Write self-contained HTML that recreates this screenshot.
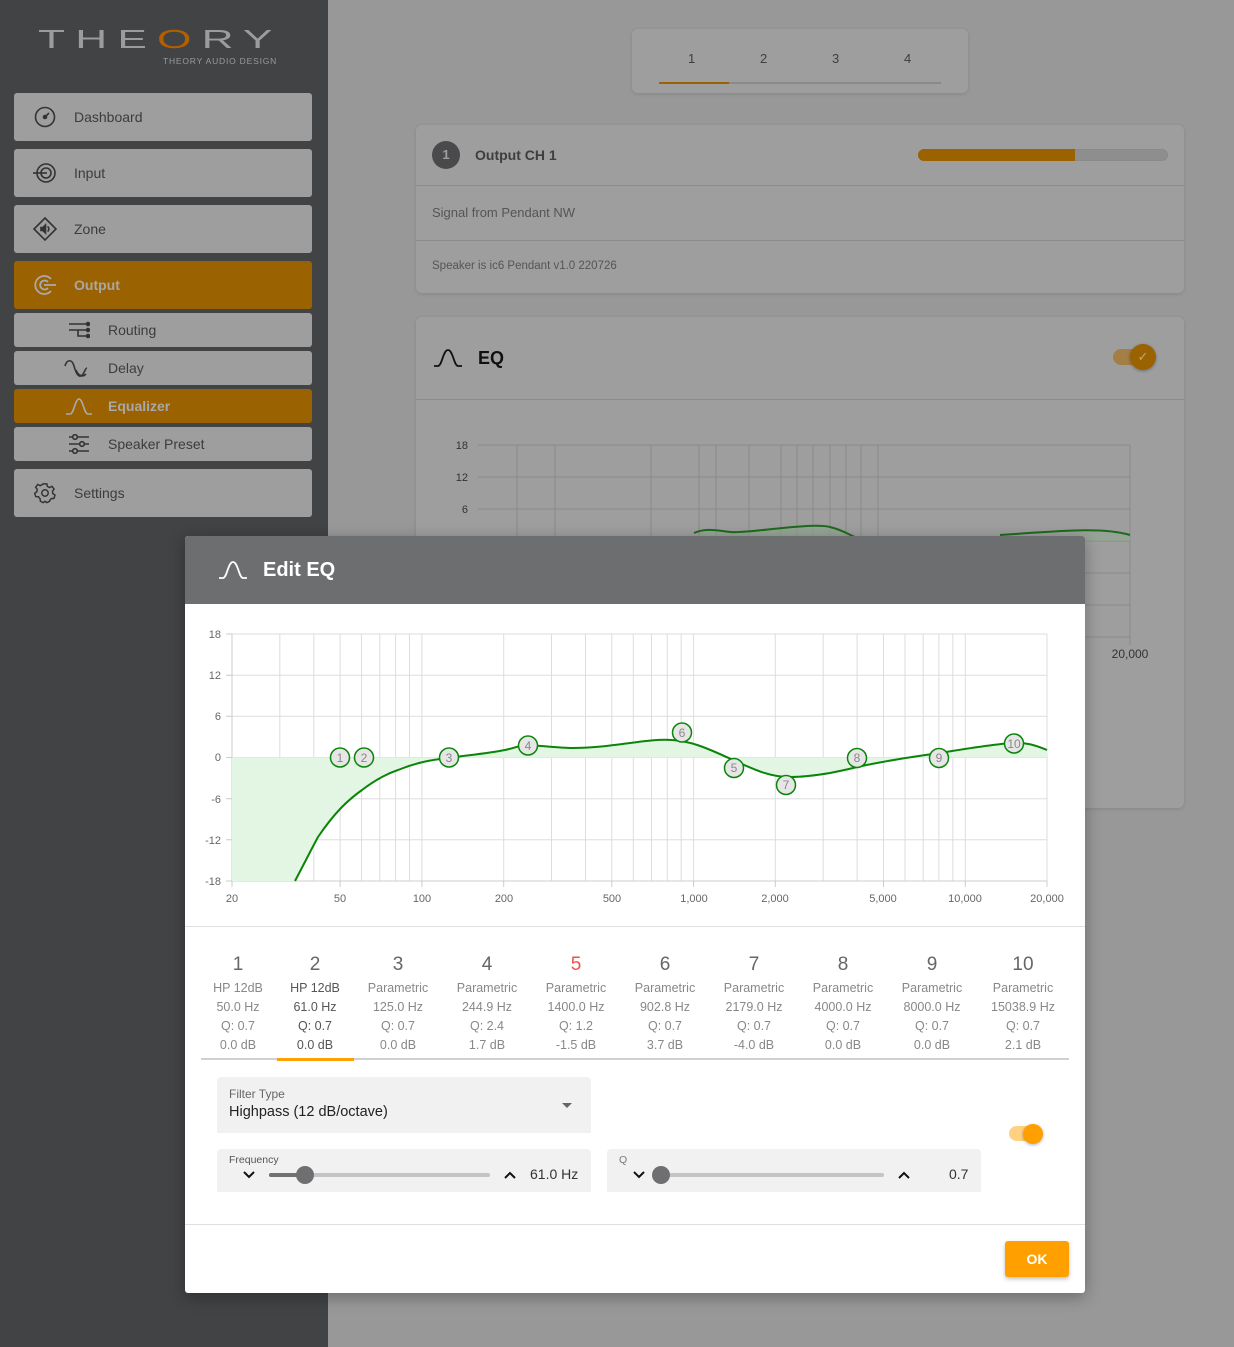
<!DOCTYPE html>
<html><head><meta charset="utf-8">
<style>
*{margin:0;padding:0;box-sizing:border-box}
body{width:1234px;height:1347px;position:relative;overflow:hidden;background:#989898;font-family:"Liberation Sans",sans-serif;}
.abs{position:absolute}
#side{left:0;top:0;width:328px;height:1347px;background:#424345}
.nav{position:absolute;left:14px;width:298px;background:#9e9e9e;border-radius:3px;color:#3c3c3c;font-size:14px}
.nav.on{background:#9a6200;color:#a8a8a8;font-weight:bold}
.nav span{position:absolute;top:50%;transform:translateY(-50%)}
.nav svg{position:absolute;top:50%;transform:translateY(-50%)}
.card{position:absolute;background:#9e9e9e;border-radius:6px;box-shadow:0 1px 4px rgba(0,0,0,.12)}
#modal{left:185px;top:536px;width:900px;height:757px;background:#fff;border-radius:3px;box-shadow:0 4px 16px rgba(0,0,0,.3);overflow:hidden}
.band{position:absolute;top:951px;width:80px;text-align:center;color:#888;font-size:12.5px;line-height:19px}
.band b{display:block;font-size:19px;font-weight:normal;color:#666;line-height:28px}
.field{position:absolute;background:#f1f1f1;border-radius:4px 4px 0 0}
</style></head><body>
<div id="side" class="abs">
  <div class="abs" style="left:38px;top:26px;font-size:26px;color:#9c9c9c;letter-spacing:6px;white-space:nowrap;transform-origin:0 0;transform:scaleX(1.7);line-height:26px">THE<span style="color:#b35f00">O</span>RY</div>
  <div class="abs" style="left:163px;top:56px;font-size:8.5px;color:#9a9a9a;letter-spacing:0.8px">THEORY AUDIO DESIGN</div>

  <div class="nav" style="top:93px;height:48px"><svg style="left:20px" width="22" height="22" viewBox="0 0 22 22" fill="none" stroke="#333" stroke-width="1.6"><circle cx="11" cy="11" r="9.5"/><path d="M11 11l4-4"/><circle cx="11" cy="11" r="1.5" fill="#333"/></svg><span style="left:60px">Dashboard</span></div>
  <div class="nav" style="top:149px;height:48px"><svg style="left:18px" width="26" height="22" viewBox="0 0 26 22" fill="none" stroke="#333" stroke-width="1.6"><circle cx="14" cy="11" r="9"/><circle cx="14" cy="11" r="5"/><path d="M1 11h14"/></svg><span style="left:60px">Input</span></div>
  <div class="nav" style="top:205px;height:48px"><svg style="left:19px" width="24" height="24" viewBox="0 0 24 24" fill="none" stroke="#333" stroke-width="1.6"><path d="M12 1L23 12 12 23 1 12z"/><path d="M8 10.5h2l2.5-2.5v8l-2.5-2.5H8z" fill="#333"/><path d="M14.5 9.5a3 3 0 0 1 0 5"/></svg><span style="left:60px">Zone</span></div>
  <div class="nav on" style="top:261px;height:48px"><svg style="left:18px" width="26" height="22" viewBox="0 0 26 22" fill="none" stroke="#aaa" stroke-width="1.8"><path d="M19 5a9 9 0 1 0 0 12"/><path d="M16 8a4.5 4.5 0 1 0 0 6"/><path d="M12 11h12"/></svg><span style="left:60px">Output</span></div>
  <div class="nav" style="top:313px;height:34px"><svg style="left:54px" width="22" height="18" viewBox="0 0 22 18" fill="none" stroke="#333" stroke-width="1.6"><path d="M1 3h20M1 9h20M10 9v6h11"/><circle cx="20" cy="3" r="1.5" fill="#333"/><circle cx="20" cy="9" r="1.5" fill="#333"/><circle cx="20" cy="15" r="1.5" fill="#333"/></svg><span style="left:94px">Routing</span></div>
  <div class="nav" style="top:351px;height:34px"><svg style="left:50px" width="30" height="20" viewBox="0 0 30 20" fill="none" stroke="#333" stroke-width="1.6"><path d="M1 8C3 1 8 1 10 8s4 11 7 10 4-8 6-8M12 12c2 5 6 8 10 4"/></svg><span style="left:94px">Delay</span></div>
  <div class="nav on" style="top:389px;height:34px"><svg style="left:51px" width="28" height="18" viewBox="0 0 28 18" fill="none" stroke="#aaa" stroke-width="1.6"><path d="M1 17h4C9 17 10 2 14 2s5 15 9 15h4"/></svg><span style="left:94px">Equalizer</span></div>
  <div class="nav" style="top:427px;height:34px"><svg style="left:54px" width="22" height="20" viewBox="0 0 22 20" fill="none" stroke="#333" stroke-width="1.6"><path d="M1 3h20M1 10h20M1 17h20"/><circle cx="7" cy="3" r="2.3" fill="#9e9e9e"/><circle cx="14" cy="10" r="2.3" fill="#9e9e9e"/><circle cx="7" cy="17" r="2.3" fill="#9e9e9e"/></svg><span style="left:94px">Speaker Preset</span></div>
  <div class="nav" style="top:469px;height:48px"><svg style="left:20px" width="22" height="22" viewBox="0 0 24 24" fill="none" stroke="#333" stroke-width="1.6"><circle cx="12" cy="12" r="3.5"/><path d="M10 2h4l.6 2.8 2.4 1.2 2.6-1.3 2.3 3-1.7 2.3.3 2.6 2.4 1.6-1.1 3.7-2.9.2-1.8 2L17 21l-3 1.5-2-1.5-2 1.5L7 21l-.4-2.9-1.8-2-2.9-.2L.8 12.2l2.4-1.6.3-2.6L1.8 5.7l2.3-3 2.6 1.3 2.4-1.2z"/></svg><span style="left:60px">Settings</span></div>
</div>

<div class="card" style="left:632px;top:29px;width:336px;height:64px">
  <div class="abs" style="left:56px;top:22px;font-size:13px;color:#3e3e3e">1</div>
  <div class="abs" style="left:128px;top:22px;font-size:13px;color:#3e3e3e">2</div>
  <div class="abs" style="left:200px;top:22px;font-size:13px;color:#3e3e3e">3</div>
  <div class="abs" style="left:272px;top:22px;font-size:13px;color:#3e3e3e">4</div>
  <div class="abs" style="left:27px;top:53px;width:282px;height:2px;background:#8a8a8a"></div>
  <div class="abs" style="left:27px;top:53px;width:70px;height:2px;background:#9a6200"></div>
</div>

<div class="card" style="left:416px;top:125px;width:768px;height:168px">
  <div class="abs" style="left:16px;top:16px;width:28px;height:28px;border-radius:50%;background:#4a4a4c;color:#9e9e9e;font-size:13px;font-weight:bold;text-align:center;line-height:28px">1</div>
  <div class="abs" style="left:59px;top:22px;font-size:14px;color:#3e3e3e;font-weight:bold">Output CH 1</div>
  <div class="abs" style="left:502px;top:24px;width:250px;height:12px;border-radius:6px;background:#8e8e8e;border:1px solid #8a8a8a"></div>
  <div class="abs" style="left:502px;top:24px;width:157px;height:12px;border-radius:6px 0 0 6px;background:#9a6200"></div>
  <div class="abs" style="left:0;top:60px;width:768px;height:1px;background:#8c8c8c"></div>
  <div class="abs" style="left:16px;top:80px;font-size:13px;color:#555">Signal from Pendant NW</div>
  <div class="abs" style="left:0;top:115px;width:768px;height:1px;background:#8c8c8c"></div>
  <div class="abs" style="left:16px;top:135px;font-size:11.5px;color:#555">Speaker is ic6 Pendant v1.0 220726</div>
</div>

<div class="card" style="left:416px;top:317px;width:768px;height:491px">
  <svg class="abs" style="left:17px;top:31px" width="30" height="20" viewBox="0 0 30 20" fill="none" stroke="#111" stroke-width="1.8"><path d="M1 18h4C9 18 10 2 15 2s6 16 10 16h4"/></svg>
  <div class="abs" style="left:62px;top:31px;font-size:18px;color:#111;font-weight:bold">EQ</div>
  <div class="abs" style="left:697px;top:32px;width:34px;height:16px;border-radius:8px;background:#a37e45"></div>
  <div class="abs" style="left:714px;top:27px;width:26px;height:26px;border-radius:50%;background:#9a6200;box-shadow:0 1px 3px rgba(0,0,0,.3);color:#c9a66b;font-size:13px;text-align:center;line-height:26px">✓</div>
  <div class="abs" style="left:0;top:82px;width:768px;height:1px;background:#8c8c8c"></div>
</div>
<svg class="abs" style="left:0;top:0" width="1234" height="1347">
  <g stroke="#8a8a8a" stroke-width="1">
    <path d="M478 445H1130M478 477H1130M478 509H1130M478 541H1130M478 573H1130M478 605H1130M478 637H1130M1130 445V645"/>
    <path d="M517 445V637M555 445V637M651 445V637M699 445V637M716 445V637M749 445V637M781 445V637M797 445V637M813 445V637M830 445V637M846 445V637M861 445V637M878 445V637"/>
  </g>
  <path d="M694 541C705 528 715 530 730 532S810 522 830 527S850 538 870 541H1000C1050 535 1090 530 1130 535V541H694Z" fill="#8fa88f" opacity=".6"/>
  <path d="M694 533C705 528 715 530 730 532S810 522 830 527S850 538 870 541M1000 535C1050 532 1100 526 1130 535" fill="none" stroke="#1e6a1e" stroke-width="2"/>
  <text x="1130" y="658" font-size="12" fill="#333" text-anchor="middle" font-family="Liberation Sans">20,000</text>
  <g font-size="11" fill="#333" text-anchor="end" font-family="Liberation Sans"><text x="468" y="449">18</text><text x="468" y="481">12</text><text x="468" y="513">6</text></g>
</svg>

<div id="modal" class="abs">
  <div class="abs" style="left:0;top:0;width:900px;height:68px;background:#6d6e70"></div>
  <svg class="abs" style="left:33px;top:24px" width="30" height="20" viewBox="0 0 30 20" fill="none" stroke="#fff" stroke-width="1.8"><path d="M1 18h4C9 18 10 2 15 2s6 16 10 16h4"/></svg>
  <div class="abs" style="left:78px;top:23px;font-size:20px;color:#fff;font-weight:bold">Edit EQ</div>
  <div class="abs" style="left:0;top:390px;width:900px;height:1px;background:#e0e0e0"></div>
  <div class="abs" style="left:0;top:688px;width:900px;height:1px;background:#e0e0e0"></div>
</div>

<svg class="abs" style="left:0;top:0" width="1234" height="1347" font-family="Liberation Sans">
  <g stroke="#ddd" stroke-width="1">
    <path d="M232 634H1047M232 675.2H1047M232 716.3H1047M232 757.5H1047M232 798.7H1047M232 839.8H1047"/>
    <path d="M279.8 634V881M313.8 634V881M340.1 634V881M361.6 634V881M379.8 634V881M395.6 634V881M409.5 634V881M421.9 634V881M503.7 634V881M551.5 634V881M585.5 634V881M611.8 634V881M633.3 634V881M651.5 634V881M667.3 634V881M681.2 634V881M693.6 634V881M775.3 634V881M823.2 634V881M857.1 634V881M883.5 634V881M905 634V881M923.2 634V881M938.9 634V881M952.8 634V881M965.3 634V881M1047 634V881"/>
  </g>
  <g stroke="#ccc"><path d="M232 634V887M226 881H1047M226 634H232M226 675.2H232M226 716.3H232M226 757.5H232M226 798.7H232M226 839.8H232M340.1 881V887M421.9 881V887M503.7 881V887M611.8 881V887M693.6 881V887M775.3 881V887M883.5 881V887M965.3 881V887M1047 881V887"/></g>
  <path d="M232 757.5V881H295C305 862 312 848 318 837C335 812 348 800 362 790C375 780 386 774 398 770C415 763 430 760 448 758C470 755 490 753 505 750C515 748 520 745 528 745C545 746 560 748 572 748C595 748 615 745 630 743C645 741 660 739 672 740C690 741 705 747 733 760C755 770 770 777 790 777C805 777 818 775 830 773C845 770 850 769 857 767C885 761 910 757 940 753C970 748 995 744 1013 743C1025 742 1035 745 1047 750V757.5Z" fill="#e3f6e3"/>
  <path d="M295 881C305 862 312 848 318 837C335 812 348 800 362 790C375 780 386 774 398 770C415 763 430 760 448 758C470 755 490 753 505 750C515 748 520 745 528 745C545 746 560 748 572 748C595 748 615 745 630 743C645 741 660 739 672 740C690 741 705 747 733 760C755 770 770 777 790 777C805 777 818 775 830 773C845 770 850 769 857 767C885 761 910 757 940 753C970 748 995 744 1013 743C1025 742 1035 745 1047 750" fill="none" stroke="#0a850a" stroke-width="2"/>
  <g fill="#e6e6e6" stroke="#0a850a" stroke-width="1.5">
    <circle cx="340" cy="757.5" r="9.5"/><circle cx="364" cy="757.5" r="9.5"/><circle cx="449" cy="757.5" r="9.5"/><circle cx="528" cy="745.5" r="9.5"/><circle cx="734" cy="768" r="9.5"/><circle cx="682" cy="732.5" r="9.5"/><circle cx="786" cy="785" r="9.5"/><circle cx="857" cy="758" r="9.5"/><circle cx="939" cy="758" r="9.5"/><circle cx="1014" cy="743.5" r="9.5"/>
  </g>
  <g font-size="12" fill="#888" text-anchor="middle">
    <text x="340" y="762">1</text><text x="364" y="762">2</text><text x="449" y="762">3</text><text x="528" y="750">4</text><text x="734" y="772">5</text><text x="682" y="737">6</text><text x="786" y="789">7</text><text x="857" y="762">8</text><text x="939" y="762">9</text><text x="1014" y="748">10</text>
  </g>
  <g font-size="11" fill="#666" text-anchor="end">
    <text x="221" y="638">18</text><text x="221" y="679">12</text><text x="221" y="720">6</text><text x="221" y="761">0</text><text x="221" y="803">-6</text><text x="221" y="844">-12</text><text x="221" y="885">-18</text>
  </g>
  <g font-size="11" fill="#666" text-anchor="middle">
    <text x="232" y="902">20</text><text x="340" y="902">50</text><text x="422" y="902">100</text><text x="504" y="902">200</text><text x="612" y="902">500</text><text x="694" y="902">1,000</text><text x="775" y="902">2,000</text><text x="883" y="902">5,000</text><text x="965" y="902">10,000</text><text x="1047" y="902">20,000</text>
  </g>
</svg>

<div class="band" style="left:198px"><b>1</b>HP 12dB<br>50.0 Hz<br>Q: 0.7<br>0.0 dB</div>
<div class="band" style="left:275px;color:#555"><b>2</b>HP 12dB<br>61.0 Hz<br>Q: 0.7<br>0.0 dB</div>
<div class="band" style="left:358px"><b>3</b>Parametric<br>125.0 Hz<br>Q: 0.7<br>0.0 dB</div>
<div class="band" style="left:447px"><b>4</b>Parametric<br>244.9 Hz<br>Q: 2.4<br>1.7 dB</div>
<div class="band" style="left:536px"><b style="color:#f0524a">5</b>Parametric<br>1400.0 Hz<br>Q: 1.2<br>-1.5 dB</div>
<div class="band" style="left:625px"><b>6</b>Parametric<br>902.8 Hz<br>Q: 0.7<br>3.7 dB</div>
<div class="band" style="left:714px"><b>7</b>Parametric<br>2179.0 Hz<br>Q: 0.7<br>-4.0 dB</div>
<div class="band" style="left:803px"><b>8</b>Parametric<br>4000.0 Hz<br>Q: 0.7<br>0.0 dB</div>
<div class="band" style="left:892px"><b>9</b>Parametric<br>8000.0 Hz<br>Q: 0.7<br>0.0 dB</div>
<div class="band" style="left:978px;width:90px"><b>10</b>Parametric<br>15038.9 Hz<br>Q: 0.7<br>2.1 dB</div>
<div class="abs" style="left:201px;top:1058px;width:868px;height:2px;background:#d0d0d0"></div>
<div class="abs" style="left:277px;top:1058px;width:77px;height:3px;background:#ffa000"></div>

<div class="field" style="left:217px;top:1077px;width:374px;height:56px">
  <div class="abs" style="left:12px;top:10px;font-size:12px;color:#666">Filter Type</div>
  <div class="abs" style="left:12px;top:27px;font-size:14.5px;color:#222">Highpass (12 dB/octave)</div>
  <div class="abs" style="left:345px;top:26px;border-left:5px solid transparent;border-right:5px solid transparent;border-top:5px solid #666"></div>
</div>
<div class="field" style="left:217px;top:1149px;width:374px;height:43px">
  <div class="abs" style="left:12px;top:5px;font-size:10.5px;color:#555">Frequency</div>
  <svg class="abs" style="left:26px;top:22px" width="12" height="8" viewBox="0 0 12 8" fill="none" stroke="#111" stroke-width="2"><path d="M1 1l5 5 5-5"/></svg>
  <div class="abs" style="left:52px;top:24px;width:221px;height:4px;border-radius:2px;background:#c4c4c4"></div>
  <div class="abs" style="left:52px;top:24px;width:36px;height:4px;border-radius:2px;background:#707070"></div>
  <div class="abs" style="left:79px;top:17px;width:18px;height:18px;border-radius:50%;background:#6f6f71"></div>
  <svg class="abs" style="left:287px;top:22px" width="12" height="8" viewBox="0 0 12 8" fill="none" stroke="#111" stroke-width="2"><path d="M1 7l5-5 5 5"/></svg>
  <div class="abs" style="left:313px;top:17px;font-size:14px;color:#333">61.0 Hz</div>
</div>
<div class="field" style="left:607px;top:1149px;width:374px;height:43px">
  <div class="abs" style="left:12px;top:5px;font-size:10.5px;color:#777">Q</div>
  <svg class="abs" style="left:26px;top:22px" width="12" height="8" viewBox="0 0 12 8" fill="none" stroke="#111" stroke-width="2"><path d="M1 1l5 5 5-5"/></svg>
  <div class="abs" style="left:46px;top:24px;width:231px;height:4px;border-radius:2px;background:#c4c4c4"></div>
  <div class="abs" style="left:45px;top:17px;width:18px;height:18px;border-radius:50%;background:#6f6f71"></div>
  <svg class="abs" style="left:291px;top:22px" width="12" height="8" viewBox="0 0 12 8" fill="none" stroke="#111" stroke-width="2"><path d="M1 7l5-5 5 5"/></svg>
  <div class="abs" style="left:342px;top:17px;font-size:14px;color:#333">0.7</div>
</div>
<div class="abs" style="left:1009px;top:1126px;width:34px;height:15px;border-radius:8px;background:#ffd180"></div>
<div class="abs" style="left:1023px;top:1124px;width:20px;height:20px;border-radius:50%;background:#ffa000;box-shadow:0 1px 3px rgba(0,0,0,.3)"></div>
<div class="abs" style="left:1005px;top:1241px;width:64px;height:36px;border-radius:3px;background:#ffa000;color:#fff;font-weight:bold;font-size:14px;text-align:center;line-height:36px;box-shadow:0 2px 4px rgba(0,0,0,.25)">OK</div>
</body></html>
